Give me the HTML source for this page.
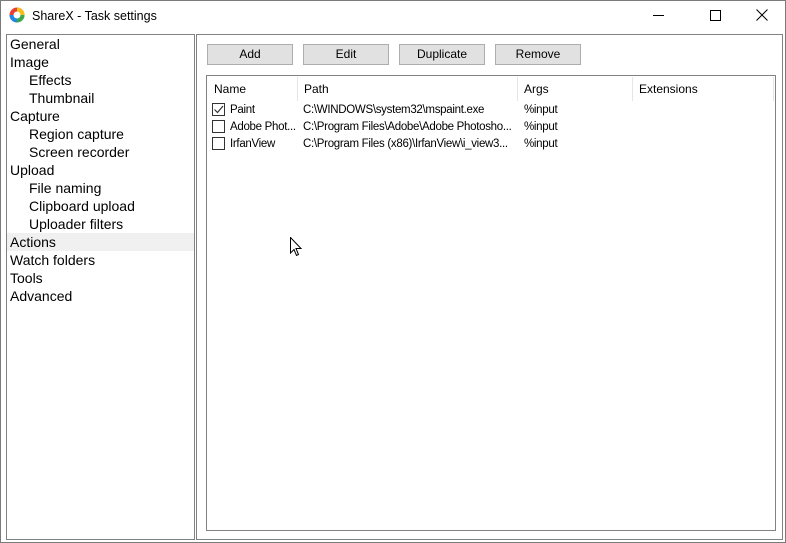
<!DOCTYPE html>
<html><head><style>
*{margin:0;padding:0;box-sizing:border-box}
body{width:786px;height:543px;background:#fff;font-family:"Liberation Sans",sans-serif;position:relative;overflow:hidden}
.a{position:absolute}
.frame{left:0;top:0;width:786px;height:543px;border:1px solid #7a7a7a}
.title{left:32px;top:9px;font-size:12.5px;color:#000}
.lp{left:6px;top:34px;width:189px;height:506px;border:1px solid #828282;background:#fff}
.rp{left:196px;top:34px;width:587px;height:506px;border:1px solid #828282;background:#fff}
.it{position:absolute;left:0;width:187px;height:18px;font-size:14px;line-height:18px;padding-left:3px;color:#000}
.sub{padding-left:22px}
.btn{top:44px;width:86px;height:21px;background:#e1e1e1;border:1px solid #adadad;font-size:12px;text-align:center;line-height:19px}
.lv{left:206px;top:75px;width:570px;height:456px;border:1px solid #828282}
.h{position:absolute;top:1px;height:24px;font-size:12px;line-height:24px;padding-left:6px;border-right:1px solid #e5e5e5}
.r{position:absolute;font-size:11.5px;height:17px;line-height:17px;white-space:nowrap;letter-spacing:-0.3px}
.cb{position:absolute;left:5px;width:13px;height:13px;border:1px solid #333;background:#fff}
</style></head><body>
<div class="a frame"></div>
<svg class="a" style="left:9px;top:7px" width="16" height="16" viewBox="0 0 16 16">
<circle cx="8" cy="8" r="7.5" fill="#e84133"/>
<path d="M8 .5A7.5 7.5 0 0 1 15.5 8H8z" fill="#f7bd1a"/>
<path d="M15.5 8A7.5 7.5 0 0 1 8 15.5V8z" fill="#38a94c"/>
<path d="M8 15.5A7.5 7.5 0 0 1 .5 8H8z" fill="#1e88e5"/>
<circle cx="8" cy="8" r="3.5" fill="#fff"/>
</svg>
<div class="a title">ShareX - Task settings</div>
<div class="a" style="left:653px;top:15px;width:11px;height:1px;background:#000"></div>
<div class="a" style="left:710px;top:10px;width:11px;height:11px;border:1px solid #000"></div>
<svg class="a" style="left:756px;top:9px" width="12" height="12"><path d="M.5 .5L11.5 11.5M11.5 .5L.5 11.5" stroke="#000" stroke-width="1"/></svg>

<div class="a lp">
<div class="it" style="top:0">General</div>
<div class="it" style="top:18px">Image</div>
<div class="it sub" style="top:36px">Effects</div>
<div class="it sub" style="top:54px">Thumbnail</div>
<div class="it" style="top:72px">Capture</div>
<div class="it sub" style="top:90px">Region capture</div>
<div class="it sub" style="top:108px">Screen recorder</div>
<div class="it" style="top:126px">Upload</div>
<div class="it sub" style="top:144px">File naming</div>
<div class="it sub" style="top:162px">Clipboard upload</div>
<div class="it sub" style="top:180px">Uploader filters</div>
<div class="it" style="top:198px;background:#f0f0f0">Actions</div>
<div class="it" style="top:216px">Watch folders</div>
<div class="it" style="top:234px">Tools</div>
<div class="it" style="top:252px">Advanced</div>
</div>
<div class="a rp"></div>
<div class="a btn" style="left:207px">Add</div>
<div class="a btn" style="left:303px">Edit</div>
<div class="a btn" style="left:399px">Duplicate</div>
<div class="a btn" style="left:495px">Remove</div>
<div class="a lv">
<div class="h" style="left:1px;width:90px">Name</div>
<div class="h" style="left:91px;width:220px">Path</div>
<div class="h" style="left:311px;width:115px">Args</div>
<div class="h" style="left:426px;width:141px">Extensions</div>
<div class="cb" style="top:27px"></div>
<svg class="a" style="left:6px;top:28px" width="11" height="11"><path d="M1.5 5.5L4.5 8.5L10 2" stroke="#333" fill="none" stroke-width="1.2"/></svg>
<div class="cb" style="top:44px"></div>
<div class="cb" style="top:61px"></div>
<div class="r" style="left:23px;top:26px">Paint</div>
<div class="r" style="left:23px;top:43px">Adobe Phot...</div>
<div class="r" style="left:23px;top:60px">IrfanView</div>
<div class="r" style="left:96px;top:26px">C:\WINDOWS\system32\mspaint.exe</div>
<div class="r" style="left:96px;top:43px">C:\Program Files\Adobe\Adobe Photosho...</div>
<div class="r" style="left:96px;top:60px">C:\Program Files (x86)\IrfanView\i_view3...</div>
<div class="r" style="left:317px;top:26px">%input</div>
<div class="r" style="left:317px;top:43px">%input</div>
<div class="r" style="left:317px;top:60px">%input</div>
</div>
<svg class="a" style="left:290px;top:237px" width="13" height="20"><path d="M.5 .5V16L4 12.5L6.5 18.5L8.5 17.5L6 11.5H11z" fill="#fff" stroke="#000"/></svg>
</body></html>
